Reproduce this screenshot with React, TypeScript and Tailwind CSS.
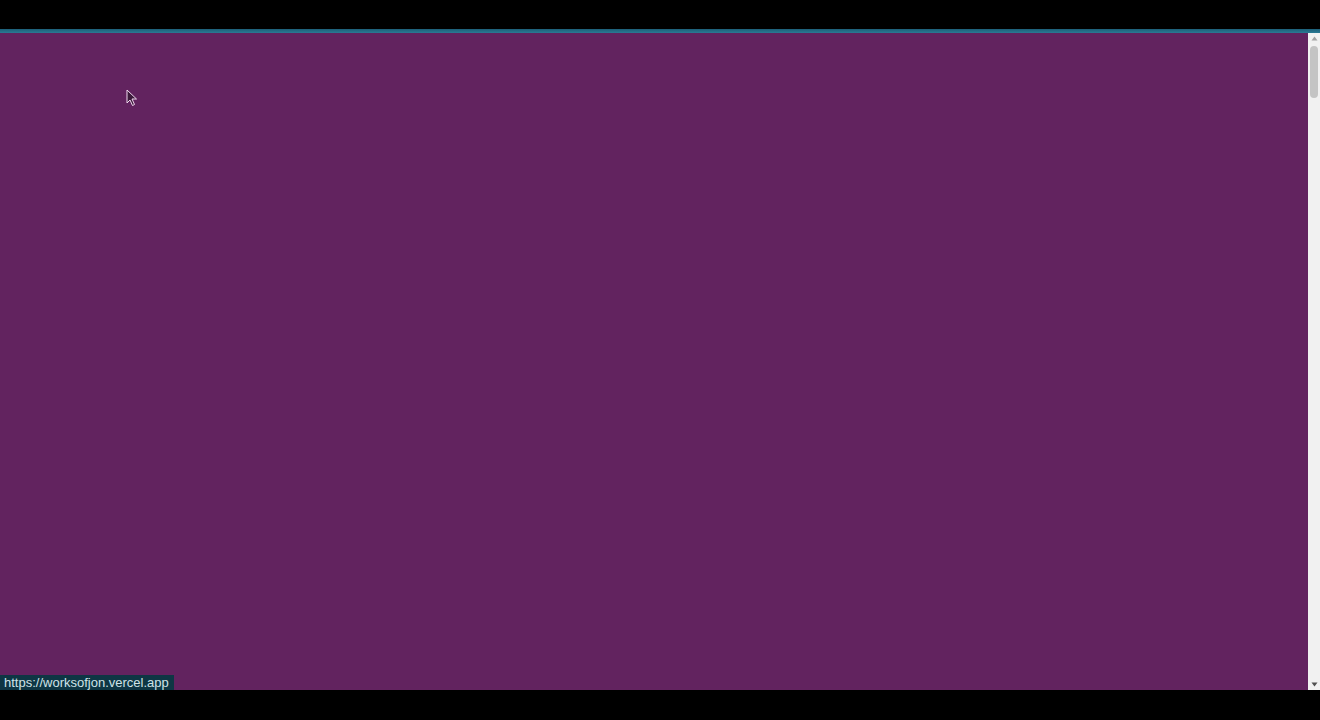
export default function App() {
  return (
    <div className="flex h-[720px] w-[1320px] flex-col overflow-hidden bg-black font-['Liberation_Sans',sans-serif]">
      {/* top chrome */}
      <div className="h-[29px] bg-black" />
      <div className="h-[4px] bg-gradient-to-b from-[#1c5f78] to-[#2a7a94]" />

      <div className="flex min-h-0 flex-1">
        {/* page */}
        <div className="relative flex-1 bg-[#62235f]">
          {/* mouse cursor */}
          <svg
            className="absolute left-[126px] top-[56px]"
            width="12"
            height="18"
            viewBox="0 0 12 18"
          >
            <path
              d="M1 1 L1 14 L4 11 L6.5 16.5 L8.5 15.5 L6 10 L10.5 10 Z"
              fill="#3b1a3a"
              stroke="#f0d8ef"
              strokeWidth="1"
              strokeLinejoin="round"
            />
          </svg>

          {/* link status bubble */}
          <div className="absolute bottom-0 left-0 flex h-[15px] items-center bg-[#0e3644] pl-[4px] pr-[5px] text-[13px] leading-none text-[#cfe3e8]">
            https://worksofjon.vercel.app
          </div>
        </div>

        {/* scrollbar */}
        <div className="flex w-[12px] flex-col items-center bg-[#f1f1f1]">
          <svg className="mt-[3px]" width="7" height="5" viewBox="0 0 7 5">
            <path d="M3.5 0.5 L6.5 4.5 L0.5 4.5 Z" fill="#a3a3a3" />
          </svg>
          <div className="mt-[5px] h-[52px] w-[8px] rounded-[4px] bg-[#c4c4c4]" />
          <div className="flex-1" />
          <svg className="mb-[3px]" width="7" height="5" viewBox="0 0 7 5">
            <path d="M0.5 0.5 L6.5 0.5 L3.5 4.5 Z" fill="#505050" />
          </svg>
        </div>
      </div>

      {/* bottom chrome */}
      <div className="h-[30px] bg-black" />
    </div>
  );
}
